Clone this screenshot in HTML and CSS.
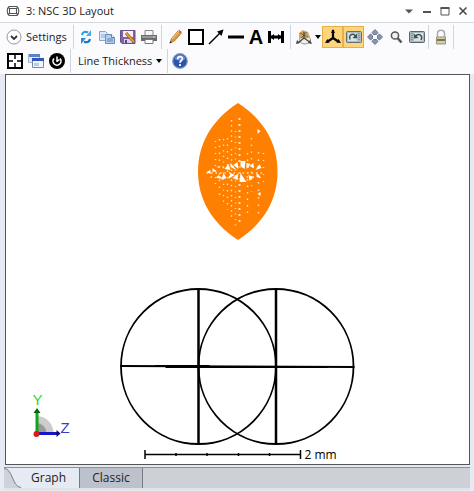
FILE: index.html
```html
<!DOCTYPE html>
<html lang="en">
<head>
    <meta charset="UTF-8">
    <meta name="viewport" content="width=device-width, initial-scale=1.0">
    <title>3: NSC 3D Layout</title>
    <link rel="stylesheet" href="styles.css">
</head>
<body>

<header class="titlebar">
    <svg class="app-icon" width="14" height="12" viewBox="0 0 14 12">
        <path d="M3 1.500h8M3 10.500h8M3 1.500C.6 3.500.6 8.500 3 10.500M11 1.500c2.400 2 2.400 7 0 9M3.500 3.500h7v5h-7zM2 2l1.500 1.500M12 2l-1.500 1.500M2 10l1.500-1.500M12 10l-1.500-1.500" fill="none" stroke="#555" stroke-width="1.100"/>
    </svg>
    <h1>3: NSC 3D Layout</h1>
    <div class="window-buttons">
        <button aria-label="Window menu"><svg width="10" height="10" viewBox="0 0 10 10"><path d="M1 3.500h8L5 7.500z" fill="#555"/></svg></button>
        <button aria-label="Minimize"><svg width="10" height="10" viewBox="0 0 10 10"><path d="M1 6h8" stroke="#555" stroke-width="2"/></svg></button>
        <button aria-label="Maximize"><svg width="10" height="10" viewBox="0 0 10 10"><path d="M1 2h8v7H1z" fill="none" stroke="#555"/><path d="M.5 2h9" stroke="#555" stroke-width="2"/></svg></button>
        <button aria-label="Close"><svg width="10" height="10" viewBox="0 0 10 10"><path d="M1.500 1.500l7 7M8.500 1.500l-7 7" stroke="#444" stroke-width="1.500"/></svg></button>
    </div>
</header>

<nav class="toolbars">
    <div class="toolbar">
        <div class="group group-settings">
            <button class="text-button">
                <svg width="16" height="16" viewBox="0 0 16 16"><circle cx="8" cy="8" r="7" fill="#fff" stroke="#999"/><path d="M5 7l3 3 3-3" fill="none" stroke="#333" stroke-width="1.800"/></svg>
                Settings
            </button>
        </div>
        <div class="group group-file">
            <button aria-label="Refresh"><svg width="16" height="16" viewBox="0 0 16 16"><path d="M4 6c.5-3 3.500-4 6-2.500" fill="none" stroke="#2f9be0" stroke-width="2.200"/><path d="M13 1v6H8z" fill="#45b0ee"/><path d="M12 10c-.5 3-3.500 4-6 2.500" fill="none" stroke="#1c77c4" stroke-width="2.200"/><path d="M3 15V9h5z" fill="#2a8bd8"/></svg></button>
            <button aria-label="Copy"><svg width="16" height="16" viewBox="0 0 16 16"><path d="M.5 2.500h6l2 2v7h-8z" fill="#dce9f8" stroke="#8ba5c9"/><path d="M2 6h5M2 8h5" stroke="#8daed6"/><path d="M6.500 5.500h6l3 3v6h-9z" fill="#b5cfee" stroke="#6d8dbd"/><path d="M8 10h6M8 12h6" stroke="#5b86bd"/><path d="M12.500 5.500v3h3" fill="#fff" stroke="#5c7daf"/></svg></button>
            <button aria-label="Save"><svg width="16" height="16" viewBox="0 0 16 16"><path d="M.5 1.500h14.500v13H2l-1.500-1.500z" fill="#8064a6" stroke="#66508d"/><path d="M3 2h10v6H3z" fill="#f3eef6"/><path d="M4 10h8v4H4z" fill="#d9d4df"/><path d="M5 11h2v3H5z" fill="#5c477d"/><path d="M6 4l8 9" stroke="#96541c" stroke-width="3"/><path d="M6 4l8 9" stroke="#f0a33b" stroke-width="1.800"/></svg></button>
            <button aria-label="Print"><svg width="16" height="16" viewBox="0 0 16 16"><path d="M4 1.500h8V7H4z" fill="#f5f5f5" stroke="#888"/><path d="M0 6h16v6H0z" fill="#66696e"/><path d="M1 7h14v2H1z" fill="#96999e"/><path d="M4 10.500h8v4H4z" fill="#fff" stroke="#777"/><circle cx="13" cy="8" r=".7" fill="#d7e6a5"/></svg></button>
        </div>
        <div class="group group-draw">
            <button aria-label="Pencil"><svg width="16" height="16" viewBox="0 0 16 16"><path d="M2 14l1.500-4.500L10 2l3 2.500L6.500 12z" fill="#dd9c3f" stroke="#a66e2b" stroke-width=".8"/><path d="M10 2l1-1 3 2-1 1.500z" fill="#c75a4d"/><path d="M4 10l7-8" stroke="#f6d28b"/><path d="M1.500 14.500l.8-2.500 1.700 1.500z" fill="#333"/></svg></button>
            <button aria-label="Rectangle"><svg width="16" height="16" viewBox="0 0 16 16"><path d="M1 1h14v14H1z" fill="#fff" stroke="#000" stroke-width="2"/></svg></button>
            <button aria-label="Arrow"><svg width="16" height="16" viewBox="0 0 16 16"><path d="M1 15L12 4" stroke="#000" stroke-width="1.500"/><path d="M15.500.5L13.500 7 9 2.500z"/></svg></button>
            <button aria-label="Line"><svg width="16" height="16" viewBox="0 0 16 16"><path d="M0 8h16" stroke="#000" stroke-width="3"/></svg></button>
            <button aria-label="Text" class="letter">A</button>
            <button aria-label="Dimension"><svg width="16" height="16" viewBox="0 0 16 16"><path d="M1.500 2v12M14.500 2v12" stroke="#000" stroke-width="3"/><path d="M2 8h12" stroke="#000" stroke-width="3"/><path d="M2 8l4-3v6zM14 8l-4-3v6z"/></svg></button>
        </div>
        <div class="group group-view">
            <button aria-label="View direction"><svg width="16" height="16" viewBox="0 0 16 16"><ellipse cx="9" cy="11" rx="5.500" ry="4" fill="#eee" stroke="#999"/><path d="M3 4l4-3 5 2 2 5-5 2-6-1z" fill="#d9a453"/><path d="M4 4l8 4M11 3L5 9" stroke="#7b6a4b"/><path d="M8 3v7M8 9l-6 5M8 9l7 5" fill="none" stroke="#444" stroke-width="1.200"/><path d="M0 15l1-4 3 3zM16 15l-4-1 2-3z" fill="#444"/></svg></button>
            <button aria-label="View options" class="caret"><svg width="6" height="4" viewBox="0 0 6 4"><path d="M0 0h6L3 4z"/></svg></button>
        </div>
        <div class="group group-navigate">
            <button aria-label="Show axes" class="active"><svg width="16" height="16" viewBox="0 0 16 16"><path d="M8 1v8.500M8 9l-6 4M8 9l6 4" fill="none" stroke="#000" stroke-width="2.200"/><path d="M8 0l2 4H6zM0 14l2.500-4 2 3.500zM16 14l-2.500-4-2 3.500z"/></svg></button>
            <button aria-label="Rotate" class="active"><svg width="16" height="16" viewBox="0 0 16 16"><rect x=".5" y="2.500" width="15" height="11" rx="1" fill="#aebbc0" stroke="#617178"/><path d="M2 4h9v8H2z" fill="#dbe3e3"/><path d="M4 10.500C2.500 7 5 4.500 8 5.500l2 2" fill="none" stroke="#3d5359" stroke-width="1.500"/><path d="M11 4.500v5L6.500 9z" fill="#3d5359"/><path d="M13 4v8" stroke="#5f757b" stroke-dasharray="1 1"/></svg></button>
            <button aria-label="Pan" class="spaced"><svg width="16" height="16" viewBox="0 0 16 16"><path d="M8 .5l3 3-1.500 2h-3L5 3.500zM8 15.500l3-3-1.500-2h-3L5 12.500zM.5 8l3-3 2 1.500v3L3.500 11zM15.500 8l-3-3-2 1.500v3l2 1.500z" fill="#8795b2" stroke="#5b6780" stroke-width=".8"/></svg></button>
            <button aria-label="Zoom" class="spaced"><svg width="16" height="16" viewBox="0 0 16 16"><circle cx="7" cy="6.500" r="3.600" fill="#edf1f5" stroke="#555" stroke-width="1.500"/><path d="M9.500 9l4 4.500" stroke="#555" stroke-width="2.500"/></svg></button>
            <button aria-label="Reset view" class="spaced"><svg width="16" height="16" viewBox="0 0 16 16"><rect x=".5" y="2.500" width="15" height="11" rx="1" fill="#a9b7bd" stroke="#59686f"/><path d="M5 4h9v8H5z" fill="#dbe3e3"/><path d="M12 11c2-3-.5-6.500-4-5L6 7.500" fill="none" stroke="#3d5359" stroke-width="1.500"/><path d="M5 4.500v5l4.500-.5z" fill="#3d5359"/><path d="M3 4v8" stroke="#5f757b" stroke-dasharray="1 1"/></svg></button>
        </div>
        <div class="group group-lock">
            <button aria-label="Lock window"><svg width="16" height="16" viewBox="0 0 16 16"><path d="M4.500 9V4.500c0-4.500 7-4.500 7 0V9" fill="none" stroke="#aaa" stroke-width="1.500"/><path d="M3.500 8h9v7h-9z" fill="#d4cda0" stroke="#99947a"/><path d="M4 10h8v2H4z" fill="#77745d"/></svg></button>
        </div>
    </div>
    <div class="toolbar">
        <div class="group group-window">
            <button aria-label="Fit to window"><svg width="16" height="16" viewBox="0 0 16 16"><path d="M1 1h14v14H1z" fill="#fff" stroke="#000" stroke-width="2"/><path d="M8 1v5M8 10v5M1 8h5M10 8h5" stroke="#000" stroke-width="1.500"/></svg></button>
            <button aria-label="Cascade windows"><svg width="16" height="16" viewBox="0 0 16 16"><path d="M.5 1.500h11v8H.5z" fill="#e2eaf5" stroke="#a3b2c9"/><path d="M1 1h11v3H1z" fill="#5b84ce"/><path d="M4.500 5.500h11v9h-11z" fill="#f1f4fa" stroke="#7289b5"/><path d="M4 5h12v3H4z" fill="#3456b5"/><path d="M6 10h5v3H6z" fill="#bfcbe2"/></svg></button>
            <button aria-label="Auto update"><svg width="16" height="16" viewBox="0 0 16 16"><circle cx="8" cy="8" r="8"/><path d="M5 5.500a4 4 0 1 0 6 0" fill="none" stroke="#fff" stroke-width="1.600"/><path d="M8 3.500V9M8 8.500l2.500-2" stroke="#fff" stroke-width="1.500"/></svg></button>
        </div>
        <div class="group group-thickness">
            <button class="text-button">Line Thickness <svg width="6" height="4" viewBox="0 0 6 4"><path d="M0 0h6L3 4z"/></svg></button>
        </div>
        <div class="group group-help">
            <button aria-label="Help" class="help"><svg width="16" height="16" viewBox="0 0 16 16"><circle cx="8" cy="8" r="7.300" fill="#2855b0" stroke="#8b9bb9" stroke-width="1.200"/><path d="M2.500 6a5.800 5.800 0 0 1 11 0c-3 2-8 2-11 0z" fill="#5f89d6"/><path d="M5.700 6.200c0-3.400 4.700-3.200 4.700-.5C10.400 7.500 8 7.600 8 9.800M8 11v2" fill="none" stroke="#fff" stroke-width="1.800"/></svg></button>
        </div>
    </div>
</nav>

<main class="viewport">
    <svg class="layout" viewBox="6 75 462 389" role="img" aria-label="3D layout">
        <!-- traced rays through the lens overlap -->
        <path d="M237.500 103C264 120 277 144 277 171.500S264 223 237.500 240C211 223 197.500 199 197.500 171.500S211 120 237.500 103z" fill="#ff8000"/>
        <g class="ray-gaps">
            <path d="M239 118V224" stroke-width="2" stroke-dasharray="2 4"/>
            <path d="M231 120V143M231 149V218" stroke-dasharray="1.500 3.600"/>
            <path d="M235 131V226" stroke-dasharray="1 4.500"/>
            <path d="M227 138V210" stroke-dasharray="1.500 5"/>
            <path d="M223 139V204" stroke-dasharray="1.200 4.400"/>
            <path d="M219 139V198" stroke-dasharray="1.500 5.300"/>
            <path d="M215 141V184" stroke-dasharray="1 5"/>
            <path d="M247 153V218" stroke-dasharray="1.500 5"/>
            <path d="M251 138V192" stroke-dasharray="1.400 5.300"/>
            <path d="M258 152V214" stroke-dasharray="1.500 6"/>
            <path d="M263 153V184" stroke-dasharray="1 6"/>
            <path d="M206 173H264" stroke-dasharray="1.500 3"/>
            <path d="M210 177H260" stroke-dasharray="1.500 4.500"/>
            <path d="M217 167H261" stroke-dasharray="1.500 3.500"/>
        </g>
        <path d="M240 161h5l-1 8-4-3zM237 162l1 7-5-4zM230 163l6 7-6-3zM246 163l4 1-4 5zM238 173l-1 7-5-2zM240 173l6 9h-7zM230 173l4 2-6 4zM228 164l2 6-6-1zM218 175l5 4-7-1zM223 173l3 5-5 2zM248 175l5 2-4 4zM249 166l4-3v5zM255 170l4-6 2 4zM256 173l5 5-5-1zM231 171h5v1h-5zM241 171h6v1h-6zM257 129l3 2-3 3zM257 194l3-2v4zM212 168l4 3-4 1zM206 172l4-2v4z" fill="#fff"/>
        <path d="M238.500 162v18M229 171.500h22" stroke="#ff8000"/>

        <!-- detector circles -->
        <g fill="none" stroke="#000">
            <circle cx="198" cy="366.500" r="77.500" stroke-width="1.800"/>
            <circle cx="275.500" cy="366.500" r="77.500" stroke-width="1.800"/>
            <path d="M198 289V444M275.500 289V444" stroke-width="2.500"/>
            <path d="M120 366L354 367" stroke-width="2"/>
            <path d="M154 365.500h55M165 367.500h162" stroke-width="1"/>
        </g>

        <!-- scale bar -->
        <path d="M144.500 454.500h155M144.500 450v9M300 450v9M175.500 453v3M206.500 453v3M238 453v3M269 453v3" fill="none" stroke="#000" stroke-width="1.500"/>
        <text x="304" y="459" class="scale-label">2 mm</text>

        <!-- axis triad -->
        <path d="M36 433V416a17 17 0 0 1 17 17z" fill="#ccc"/>
        <path d="M36 433v-10a10 10 0 0 1 10 10z" fill="#999"/>
        <path d="M36.500 432V412" stroke="#13a513" stroke-width="3"/>
        <path d="M36.500 408l3.500 5h-7z" fill="#0b650b"/>
        <path d="M37 433.500h20" stroke="#1515cc" stroke-width="3"/>
        <path d="M60 433.500l-4-3.500v7z" fill="#0c0c65"/>
        <circle cx="36" cy="434" r="3" fill="#d61b1b"/>
        <text x="32" y="405" class="axis axis-y">Y</text>
        <text x="60" y="433" class="axis axis-z">Z</text>
    </svg>
</main>

<footer class="tabs">
    <button class="tab tab-graph"><svg width="20" height="20" viewBox="0 0 20 20"><path d="M0 1c9 0 8 18 17 19H0z" fill="#cdd2db"/><path d="M0 .5c9 0 8 18.500 17 19" fill="none" stroke="#777b83"/></svg>Graph</button>
    <button class="tab tab-classic">Classic</button>
</footer>

</body>
</html>
```

FILE: styles.css
```css
* {
    box-sizing: border-box;
}
body {
    margin: 0;
    height: 100vh;
    display: flex;
    flex-direction: column;
    background-color: #e6eaf2;
    color: #222;
    font-family: "Open Sans", "Noto Sans", sans-serif;
    font-size: 11px;
    line-height: 16px;
}
button {
    display: flex;
    align-items: center;
    justify-content: center;
    padding: 0;
    border: none;
    background: none;
    color: inherit;
    font: inherit;
    white-space: nowrap;
}
svg {
    display: block;
    flex-shrink: 0;
}
.titlebar {
    height: 23px;
    display: flex;
    align-items: center;
    padding: 0 6px;
    background-color: #fff;
    border-bottom: 1px solid #d5d9e0;
}
.titlebar h1 {
    margin: 0 0 0 6px;
    font-size: 11px;
    font-weight: normal;
}
.window-buttons {
    display: flex;
    gap: 8px;
    margin-left: auto;
}
.toolbars {
    height: 51px;
    padding: 2px 5px 0;
    background-color: #fbfbfd;
}
.toolbar {
    height: 24px;
    display: flex;
}
.group {
    display: flex;
    align-items: center;
    border-right: 1px solid #d0d4dc;
}
.group button {
    width: 20px;
    height: 22px;
}
.group .text-button {
    width: auto;
    gap: 4px;
}
.group-settings {
    width: 69px;
    padding-left: 1px;
}
.group-file {
    gap: 1px;
    padding: 0 2px;
}
.group-draw {
    padding: 0 4px;
}
.group-view {
    padding: 0 1px 0 3px;
    border: none;
}
.group .caret {
    width: 7px;
}
.group-navigate {
    padding: 0 1px 0 0;
}
.group-lock {
    padding: 0 2px;
}
.group .active {
    width: 21px;
    background-color: #ffd57b;
    border: 1px solid #e3b04b;
}
.group .spaced {
    width: 21px;
}
.group .letter {
    font-family: "Liberation Sans", Arial, sans-serif;
    font-size: 20px;
    font-weight: bold;
    color: #000;
}
.group-window {
    padding-right: 3px;
    gap: 1px;
}
.group-thickness {
    width: 97px;
    padding-left: 7px;
}
.group-help {
    padding-left: 2px;
    border: none;
}
.viewport {
    flex: 1;
    min-height: 0;
    margin: 0 4px 0 5px;
    border: 1px solid #555;
    background-color: #fff;
}
.layout {
    width: 100%;
    height: 100%;
}
.ray-gaps {
    fill: none;
    stroke: #ffe3b5;
    stroke-width: 1.4;
}
.scale-label {
    font-size: 12px;
}
.axis {
    font-family: "Liberation Sans", Arial, sans-serif;
    font-size: 15px;
}
.axis-y {
    fill: #2fd82f;
}
.axis-z {
    fill: #3a3ad0;
}
.tabs {
    height: 23px;
    display: flex;
    margin: 2px 4px 1px;
    border-top: 1px solid #8c9097;
    border-bottom: 2px solid #e0e4ea;
    background-color: #cdd0d7;
}
.tab {
    font-size: 12px;
}
.tab-graph {
    width: 75px;
    justify-content: flex-start;
    gap: 7px;
    background-color: #e6eaf2;
}
.tab-classic {
    width: 64px;
    border-left: 1px solid #777b83;
    border-right: 1px solid #777b83;
    background-color: #bcc1cc;
}
```
